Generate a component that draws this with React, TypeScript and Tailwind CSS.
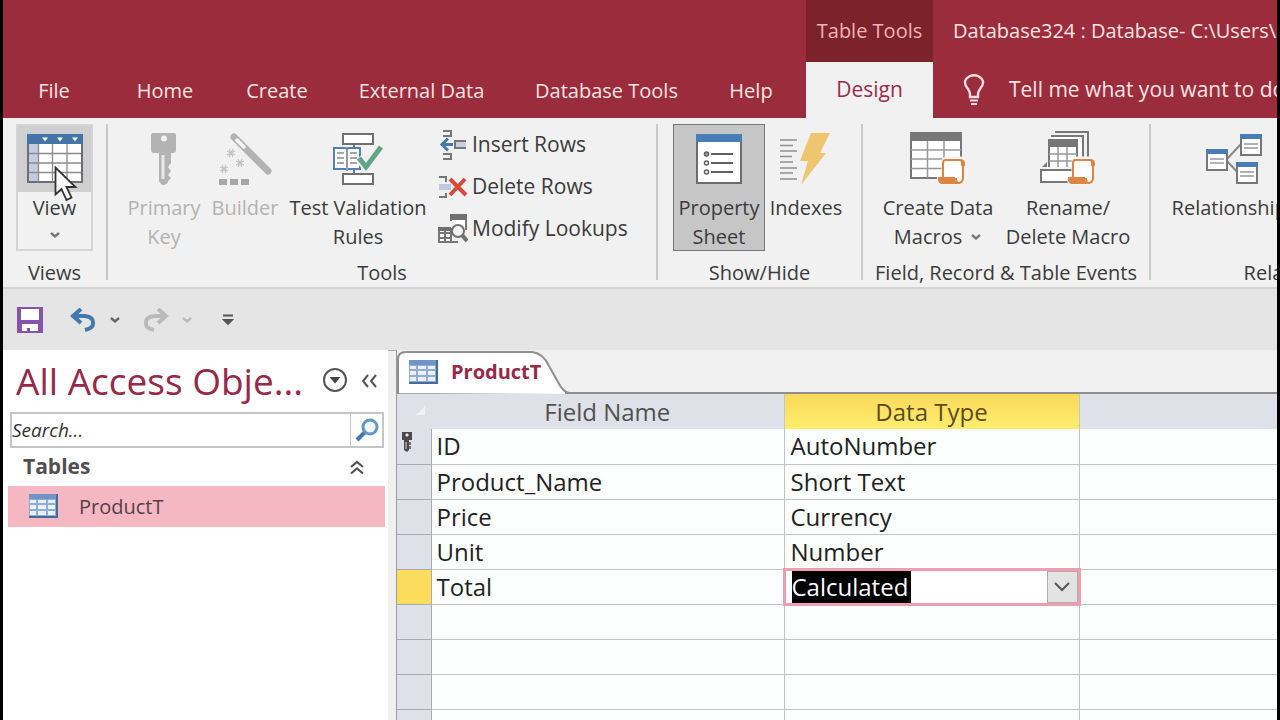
import React from "react";

type IconProps = { className?: string };

const svg = (w: number, h: number, children: React.ReactNode, className = "") => (
  <svg width={w} height={h} viewBox={`0 0 ${w} ${h}`} fill="none" className={`shrink-0 ${className}`} aria-hidden="true">
    {children}
  </svg>
);

const Caret = ({ className = "" }: IconProps) =>
  svg(12, 8, <path d="M2 2l4 3.500L10 2" stroke="currentColor" strokeWidth="2.400" />, className);

const ViewIcon = () =>
  svg(
    56,
    50,
    <>
      <rect x="1" y="1" width="54" height="47" fill="#fff" stroke="#6a7076" strokeWidth="2" />
      <rect x="0" y="0" width="56" height="10" fill="#4473a8" />
      <rect x="2" y="10" width="9" height="37" fill="#c3cbe0" />
      <path d="M25.500 10v38M40 10v38M11.500 10v38" stroke="#8c8c8c" strokeWidth="1.300" />
      <path d="M2 19.500h52M2 29h52M2 38.500h52" stroke="#8c8c8c" strokeWidth="1.300" />
      <path d="M15 3.500h6l-3 4zM30 3.500h6l-3 4zM45 3.500h6l-3 4z" fill="#fff" />
    </>,
  );

const KeyIcon = () =>
  svg(
    28,
    54,
    <>
      <path d="M3 1h21q2 0 2 2v15q0 3-3 3h-2v10l-3 4 3 4-3 4 3 3-3 3v1q-3 5-7 2l-2-3V21H4q-3 0-3-3V3q0-2 2-2z" fill="#b3b3b3" />
      <circle cx="14" cy="6.500" r="3" fill="#f1f1f1" />
      <path d="M13 23v24" stroke="#e8e8e8" strokeWidth="3" />
    </>,
  );

const Spark = ({ x, y }: { x: number; y: number }) => (
  <path
    d={`M${x - 4} ${y - 2}l8 4M${x + 2} ${y - 4}l-4 8M${x - 2} ${y - 4}l4 8M${x - 4} ${y + 2}l8-4`}
    stroke="#c0c0c0"
    strokeWidth="1.200"
  />
);

const WandIcon = () =>
  svg(
    54,
    54,
    <>
      <path d="M16 5l34 34" stroke="#b3b3b3" strokeWidth="7" strokeLinecap="round" />
      <path d="M19 8l7 7" stroke="#f6f6f6" strokeWidth="3.500" strokeLinecap="round" />
      <Spark x={13} y={21} />
      <Spark x={22} y={31} />
      <Spark x={6} y={37} />
      <path d="M1 47h8v6H1zM12 47h8v6h-8zM23 47h8v6h-8z" fill="#a8a8a8" />
    </>,
  );

const ValidationIcon = () =>
  svg(
    52,
    54,
    <>
      <path d="M22 10v36" stroke="#707070" strokeWidth="2" />
      <rect x="11" y="2" width="30" height="10" fill="#fff" stroke="#707070" strokeWidth="2" />
      <rect x="11" y="42" width="30" height="10" fill="#fff" stroke="#707070" strokeWidth="2" />
      <path d="M2 16h11q2 0 2 2 0-2 2-2h11v21H2z" fill="#fff" stroke="#4f81b8" strokeWidth="2" />
      <path d="M15 17v22" stroke="#9a9a9a" strokeWidth="2" />
      <path d="M5 21h7M5 26h7M5 31h7M18 21h7M18 26h7M18 31h7" stroke="#888" strokeWidth="1.500" />
      <path d="M26 26l8 9L49 15" stroke="#f1f1f1" strokeWidth="8" />
      <path d="M27 26l7 9L49 15" stroke="#62a487" strokeWidth="5" />
    </>,
  );

const InsertRowsIcon = () =>
  svg(
    28,
    32,
    <>
      <path d="M4 2h8v5H4M4 30h8v-5H4" stroke="#777" strokeWidth="2" />
      <path d="M2 15.500h12M9 9.500l-6 6 6 6" stroke="#4479ad" strokeWidth="3" />
      <path d="M27 12H16v7h11" fill="#ccd0de" stroke="#777" strokeWidth="2" />
    </>,
  );

const DeleteRowsIcon = () =>
  svg(
    30,
    24,
    <>
      <path d="M1 2h7v5M1 22h7v-4" stroke="#777" strokeWidth="2" />
      <rect x="1" y="9" width="12" height="6" fill="#c3c7df" />
      <path d="M12 4l16 16M27 4L12 20" stroke="#d84b3c" strokeWidth="4" />
    </>,
  );

const LookupIcon = () =>
  svg(
    30,
    30,
    <>
      <path d="M13 7V1h15v15" fill="#fff" stroke="#777" strokeWidth="2" />
      <rect x="12" y="0" width="17" height="6" fill="#707070" />
      <path d="M1 15h12v13H1zM1 19h12M1 24h12M7 15v13M13 28h7" fill="#fff" stroke="#777" strokeWidth="2" />
      <rect x="0" y="13" width="13" height="4" fill="#707070" />
      <circle cx="20" cy="17" r="6" fill="#f4f4f4" stroke="#707070" strokeWidth="2" />
      <path d="M24 21l5 6" stroke="#707070" strokeWidth="4" />
    </>,
  );

const PropertySheetIcon = () =>
  svg(
    46,
    50,
    <>
      <rect x="1" y="1" width="44" height="48" fill="#fff" stroke="#6d6d6d" strokeWidth="2" />
      <rect x="0" y="0" width="46" height="8" fill="#4a7db5" />
      <path d="M15 20h22M15 29h22M15 38h22" stroke="#606060" strokeWidth="1.800" />
      <circle cx="10.500" cy="20" r="2" fill="#aaa" stroke="#606060" strokeWidth="1.500" />
      <circle cx="10.500" cy="29" r="2" stroke="#606060" strokeWidth="1.500" />
      <circle cx="10.500" cy="38" r="2" stroke="#606060" strokeWidth="1.500" />
    </>,
  );

const IndexesIcon = () =>
  svg(
    54,
    54,
    <>
      <path d="M1 8h17M1 13.500h13M1 19h17M1 24.500h12M1 30h13M1 36h17M1 41h13M1 47h17" stroke="#8f8f8f" strokeWidth="1.600" />
      <path d="M32 1h19l-10 20h6L22 53l7-24h-8z" fill="#edc66f" />
    </>,
  );

const Scroll = () => (
  <>
    <path d="M33 31q0-4 4-4h14q5 0 5 6h-4v15q0 5-4 5H31q-4-3-2-7h4z" fill="#fff" stroke="#f4f4f4" strokeWidth="3" />
    <path d="M33 46V32q0-3 3-3h14q3 0 3 4v14q0 4-4 5-3 0-3-5" fill="#fff" stroke="#df8543" strokeWidth="2" />
    <path d="M28 46h17v3q1 3 4 4H31q-4-2-3-7zM50 28q6 0 5 7h-4v-3z" fill="#df8543" />
  </>
);

const CreateMacroIcon = () =>
  svg(
    56,
    56,
    <>
      <rect x="1" y="2" width="50" height="45" fill="#fff" stroke="#777" strokeWidth="2" />
      <rect x="0" y="1" width="52" height="9" fill="#777" />
      <path d="M17.500 10v37M34 10v37M1 19h50M1 28h50M1 37.500h50" stroke="#999" strokeWidth="1.500" />
      <Scroll />
    </>,
  );

const RenameMacroIcon = () =>
  svg(
    56,
    56,
    <>
      <path d="M15 1h33v36" stroke="#777" strokeWidth="2" />
      <path d="M11 5h32v32" fill="#fff" stroke="#777" strokeWidth="2" />
      <path d="M9 10h28v28H9z" fill="#fff" stroke="#777" strokeWidth="2" />
      <rect x="8" y="8" width="30" height="8" fill="#777" />
      <path d="M18 16v20M27 16v20M9 23h28M9 30h28" stroke="#999" strokeWidth="1.500" />
      <path d="M1 37l6-6v6z" fill="#777" />
      <rect x="0" y="36" width="36" height="3" fill="#f4f4f4" />
      <rect x="1" y="39" width="34" height="12" fill="#fff" stroke="#777" strokeWidth="2" />
      <Scroll />
    </>,
  );

const MiniWindow = ({ x, y }: { x: number; y: number }) => (
  <>
    <rect x={x + 1} y={y + 1} width="20" height="20" fill="#fff" stroke="#777" strokeWidth="2" />
    <rect x={x} y={y} width="22" height="5" fill="#4a7db5" />
    <path d={`M${x + 4} ${y + 10}h14M${x + 4} ${y + 14}h14`} stroke="#999" strokeWidth="1.300" />
  </>
);

const RelationshipsIcon = () =>
  svg(
    56,
    50,
    <>
      <path d="M20 26L36 9M20 26l14 15" stroke="#888" strokeWidth="2" />
      <MiniWindow x={34} y={0} />
      <MiniWindow x={0} y={15} />
      <MiniWindow x={30} y={28} />
    </>,
  );

const BulbIcon = () =>
  svg(
    22,
    32,
    <>
      <path d="M7 23v-3q0-2-2-5-7-8 2-13 4-1.500 8 0 9 5 2 13-2 3-2 5v3z" stroke="#f9dce0" strokeWidth="2.400" />
      <path d="M7 26.500h8M8 30h6" stroke="#f9dce0" strokeWidth="2" />
    </>,
  );

const SaveIcon = () =>
  svg(
    26,
    26,
    <>
      <path d="M0 0h26v26H0z" fill="#8653ad" />
      <path d="M4 2h18v11H4zM5 17h16v7h-8v-3h-3v3H5z" fill="#fff" />
    </>,
  );

const UndoIcon = ({ className = "" }: IconProps) =>
  svg(
    26,
    24,
    <path d="M11 1L3 8l8 7M3 8h12q9 1 8 8 0 4-8 6" stroke="currentColor" strokeWidth="4" />,
    className,
  );

const SheetIcon = () =>
  svg(
    30,
    25,
    <>
      <rect x="0" y="0" width="29" height="24" fill="#456a9c" />
      <rect x="0" y="0" width="27" height="22" fill="#8fadd4" />
      <rect x="0" y="0" width="27" height="5" fill="#6f94c6" />
      <path
        d="M1 6h6v3H1zM9 6h8v3H9zM19 6h7v3h-7zM1 11h6v4H1zM9 11h8v4H9zM19 11h7v4h-7zM1 17h6v4H1zM9 17h8v4H9zM19 17h7v4h-7z"
        fill="#e9f0f8"
      />
    </>,
  );

const tabs = [
  { label: "File", width: "w-[102px]" },
  { label: "Home", width: "w-[120px]" },
  { label: "Create", width: "w-[104px]" },
  { label: "External Data", width: "w-[185px]" },
  { label: "Database Tools", width: "w-[185px]" },
  { label: "Help", width: "w-[104px]" },
];

function Header() {
  return (
    <header className="flex h-[118px] bg-[#9b2c3c] text-[#fbe3e5]">
      <nav className="flex w-[803px] shrink-0 items-end">
        {tabs.map((t) => (
          <button key={t.label} className={`h-[54px] shrink-0 whitespace-nowrap ${t.width}`}>
            {t.label}
          </button>
        ))}
      </nav>
      <div className="flex w-[127px] shrink-0 flex-col">
        <div className="flex h-[62px] items-center justify-center bg-[#7b222b] whitespace-nowrap text-[#f0b3b9]">Table Tools</div>
        <button className="flex-1 bg-[#f1f1f1] text-[21px] text-[#9b2c4c]">Design</button>
      </div>
      <div className="flex min-w-0 flex-1 flex-col overflow-hidden whitespace-nowrap">
        <h1 className="flex h-[62px] items-center pl-5">Database324 : Database- C:\Users\</h1>
        <button className="flex flex-1 items-center gap-6 pl-[30px] text-[21px] whitespace-nowrap">
          <BulbIcon />
          Tell me what you want to do
        </button>
      </div>
    </header>
  );
}

type GroupProps = { label: string; className: string; children: React.ReactNode; last?: boolean };

function Group({ label, className, children, last }: GroupProps) {
  return (
    <section
      className={`flex h-[156px] flex-col justify-between ${last ? "" : "border-r-2 border-[#c8c8c8]"} ${className}`}
    >
      <div className="flex h-[127px]">{children}</div>
      <h2 className="text-center leading-[14px] whitespace-nowrap">{label}</h2>
    </section>
  );
}

type BigProps = { icon: React.ReactNode; lines: React.ReactNode[]; className: string };

function BigButton({ icon, lines, className }: BigProps) {
  return (
    <button className={`flex shrink-0 flex-col items-center whitespace-nowrap ${className}`}>
      <span className="flex h-[69px] items-center justify-center">{icon}</span>
      {lines.map((l, i) => (
        <span key={i} className="flex h-[29px] items-center gap-2">
          {l}
        </span>
      ))}
    </button>
  );
}

function SmallButton({ icon, label }: { icon: React.ReactNode; label: string }) {
  return (
    <button className="flex h-[42px] items-center gap-1 text-[21px] whitespace-nowrap">
      <span className="flex w-[30px] justify-center">{icon}</span>
      {label}
    </button>
  );
}

function Ribbon() {
  return (
    <div className="flex h-[171px] overflow-hidden border-b-2 border-[#d4d4d4] bg-[#f1f1f1] pt-[6px] text-[#3b3b3b]">
      <Group label="Views" className="w-[105px] shrink-0">
        <div className="relative ml-[13px]">
          <button className="flex h-[127px] w-[77px] flex-col items-center border-2 border-[#d4d4d4]">
            <span className="flex h-[67px] w-full items-center justify-center bg-[#cfcfcf]">
              <ViewIcon />
            </span>
            <span className="h-[29px] leading-[31px]">View</span>
            <span className="flex h-[29px] items-center text-[#777]">
              <Caret />
            </span>
          </button>
          <svg width="24" height="36" viewBox="0 0 24 36" className="absolute top-[42px] left-[38px]" aria-hidden="true">
            <path d="M1.500 1.500v27l6-5.500 5 11 5-2.500-5-10.500h9z" fill="#fff" stroke="#333" strokeWidth="1.800" />
          </svg>
        </div>
      </Group>
      <Group label="Tools" className="w-[550px] shrink-0">
        <BigButton icon={<KeyIcon />} lines={["Primary", "Key"]} className="ml-[15px] w-[82px] text-[#b3b3b3]" />
        <BigButton icon={<WandIcon />} lines={["Builder"]} className="w-[80px] text-[#b3b3b3]" />
        <BigButton icon={<ValidationIcon />} lines={["Test Validation", "Rules"]} className="w-[146px]" />
        <div className="ml-[7px] flex flex-col">
          <SmallButton icon={<InsertRowsIcon />} label="Insert Rows" />
          <SmallButton icon={<DeleteRowsIcon />} label="Delete Rows" />
          <SmallButton icon={<LookupIcon />} label="Modify Lookups" />
        </div>
      </Group>
      <Group label="Show/Hide" className="w-[205px] shrink-0">
        <BigButton
          icon={<PropertySheetIcon />}
          lines={["Property", "Sheet"]}
          className="ml-[15px] w-[92px] bg-[#c6c6c6] outline-1 -outline-offset-1 outline-[#777]"
        />
        <BigButton icon={<IndexesIcon />} lines={["Indexes"]} className="w-[82px]" />
      </Group>
      <Group label="Field, Record & Table Events" className="w-[288px] shrink-0">
        <BigButton
          icon={<CreateMacroIcon />}
          lines={[
            "Create Data",
            <>
              Macros <Caret className="text-[#777]" />
            </>,
          ]}
          className="ml-[12px] w-[126px]"
        />
        <BigButton icon={<RenameMacroIcon />} lines={["Rename/", "Delete Macro"]} className="w-[134px]" />
      </Group>
      <Group label="Relationships" className="w-[310px] shrink-0" last>
        <BigButton icon={<RelationshipsIcon />} lines={["Relationships"]} className="ml-[15px] w-[136px]" />
      </Group>
    </div>
  );
}

function QuickAccess() {
  return (
    <div className="flex h-[61px] items-center bg-[#e5e5e5] pl-[14px]">
      <button aria-label="Save">
        <SaveIcon />
      </button>
      <button aria-label="Undo" className="ml-[27px]">
        <UndoIcon className="text-[#4479ad]" />
      </button>
      <button aria-label="Undo history" className="ml-[13px] text-[#666]">
        <Caret />
      </button>
      <button aria-label="Redo" className="ml-[22px]">
        <UndoIcon className="-scale-x-100 text-[#bababa]" />
      </button>
      <button aria-label="Redo history" className="ml-[12px] text-[#bababa]">
        <Caret />
      </button>
      <button aria-label="Customize toolbar" className="ml-[29px]">
        {svg(12, 12, <path d="M1 1.500h10M2 6h8l-4 4z" stroke="#555" strokeWidth="1.800" fill="#555" />)}
      </button>
    </div>
  );
}

function NavPane() {
  return (
    <aside className="w-[385px] shrink-0 bg-white">
      <div className="flex h-[62px] items-center pl-[13px]">
        <h2 className="w-[306px] text-[37px] leading-[60px] whitespace-nowrap text-[#97294a]">All Access Obje...</h2>
        <button aria-label="Navigation options">
          {svg(
            26,
            26,
            <>
              <circle cx="13" cy="12" r="11" fill="#fff" stroke="#555" strokeWidth="2" />
              <path d="M7.500 9h11L13 15.500z" fill="#444" />
            </>,
          )}
        </button>
        <button aria-label="Collapse pane" className="ml-3">
          {svg(18, 16, <path d="M8 2L3 8l5 6M16 2l-5 6 5 6" stroke="#555" strokeWidth="2" />)}
        </button>
      </div>
      <form className="ml-[7px] flex h-[36px] w-[374px] border-2 border-[#c6c6c6]">
        <input
          aria-label="Search"
          placeholder="Search..."
          className="min-w-0 flex-1 text-[19px] italic outline-none placeholder:text-[#333]"
        />
        <button type="button" aria-label="Find" className="flex w-[32px] items-center justify-center border-l border-[#c6c6c6]">
          {svg(
            26,
            26,
            <>
              <path d="M11 15l-8 8" stroke="#4479ad" strokeWidth="4" />
              <circle cx="16" cy="10" r="7" fill="#f1f6fc" stroke="#6795c4" strokeWidth="3" />
            </>,
          )}
        </button>
      </form>
      <button className="flex h-[38px] w-full items-center justify-between pr-[23px] pl-[20px] text-[21px] font-bold text-[#505050]">
        Tables
        {svg(16, 16, <path d="M2 8l6-5 6 5M2 14.500l6-5 6 5" stroke="#555" strokeWidth="2.200" />)}
      </button>
      <button className="ml-[5px] flex h-[41px] w-[377px] items-center gap-5 bg-[#f5b8c3] pl-[21px] text-[#554048]">
        <SheetIcon />
        ProductT
      </button>
    </aside>
  );
}

const fields = [
  { name: "ID", type: "AutoNumber", key: true },
  { name: "Product_Name", type: "Short Text" },
  { name: "Price", type: "Currency" },
  { name: "Unit", type: "Number" },
  { name: "Total", type: "Calculated", active: true },
  { name: "", type: "" },
  { name: "", type: "" },
  { name: "", type: "" },
  { name: "", type: "" },
];

function TableDesigner() {
  return (
    <main className="min-w-0 flex-1 overflow-hidden border-l border-[#9a9a9a]">
      <div className="grid h-[44px] bg-[#f0f0f0]">
        <svg width="100%" height="44" className="col-start-1 row-start-1" aria-hidden="true">
          <path d="M1 44V9q0-7 8-7h126q11 1 17 14l9 16q5 10 11 11v2z" fill="#fff" stroke="#8f8f8f" strokeWidth="2" />
          <path d="M168 43H4000" stroke="#8f8f8f" strokeWidth="2" />
        </svg>
        <button className="col-start-1 row-start-1 flex w-[150px] items-center gap-3 pl-[12px] text-[20px] font-bold text-[#97294a]">
          <SheetIcon />
          ProductT
        </button>
      </div>
      <table className="w-full table-fixed border-collapse text-[24px] text-[#222]">
        <colgroup>
          <col className="w-[34px]" />
          <col className="w-[353px]" />
          <col className="w-[295px]" />
          <col />
        </colgroup>
        <thead>
          <tr className="h-[35px] bg-[#dfe1e8] text-[#505050]">
            <th className="p-0 pr-[6px] pb-[2px]" aria-label="Row selector">
              {svg(9, 9, <path d="M9 0v9H0z" fill="#f2f2f6" />, "ml-auto")}
            </th>
            <th className="border-r border-[#c4c6cc] p-0 leading-[34px] font-normal">Field Name</th>
            <th className="border-r border-[#c4c6cc] bg-linear-to-b from-[#fbd75a] to-[#fdee6e] p-0 leading-[34px] font-normal text-[#5e4a22]">
              Data Type
            </th>
            <th className="p-0" aria-label="Description" />
          </tr>
        </thead>
        <tbody>
          {fields.map((f, i) => (
            <tr key={i} className="h-[35px] bg-[#fcfffe]">
              <td className={`border-r border-b border-[#a9abb2] p-0 ${f.active ? "bg-[#fbdc5c]" : "bg-[#dfe1e8]"}`}>
                {f.key &&
                  svg(
                    12,
                    20,
                    <>
                      <path d="M1 0h10v8H8v10l-2 2-3-2V8H1z" fill="#4a4a4a" />
                      <path d="M5 2h2v2H5zM5 10v7" fill="#fff" stroke="#ddd" />
                      <path d="M8 10h2v3H8zM8 14h2v3H8z" fill="#777" />
                    </>,
                    "mb-2 ml-[4px]",
                  )}
              </td>
              <td className="border-r border-b border-[#c2c4c8] p-0 pl-[5px] leading-[34px]">{f.name}</td>
              <td className="border-r border-b border-[#c2c4c8] p-0 leading-[34px]">
                {f.active ? (
                  <div className="relative flex h-[34px] justify-between bg-white pl-[7px] outline-[3px] -outline-offset-1 outline-[#ee9db2]">
                    <input
                      aria-label="Data type"
                      defaultValue={f.type}
                      className="w-[119px] bg-black text-white outline-none"
                    />
                    <button
                      aria-label="Choose data type"
                      className="my-px mr-px flex w-[31px] items-center justify-center border border-[#adadad] bg-[#e3e3e3]"
                    >
                      {svg(18, 12, <path d="M2 2l7 7 7-7" stroke="#555" strokeWidth="2" />)}
                    </button>
                  </div>
                ) : (
                  <span className="pl-[6px]">{f.type}</span>
                )}
              </td>
              <td className="border-b border-[#c2c4c8] p-0" />
            </tr>
          ))}
        </tbody>
      </table>
    </main>
  );
}

export default function App() {
  return (
    <div className="flex h-screen flex-col overflow-hidden border-x-[3px] border-black bg-white font-['Open_Sans','Noto_Sans',sans-serif] text-[20px]">
      <Header />
      <Ribbon />
      <QuickAccess />
      <div className="flex min-h-0 flex-1">
        <NavPane />
        <div className="w-[8px] shrink-0 border-t border-[#aaa] bg-[#f0f0f0]" />
        <TableDesigner />
      </div>
    </div>
  );
}
